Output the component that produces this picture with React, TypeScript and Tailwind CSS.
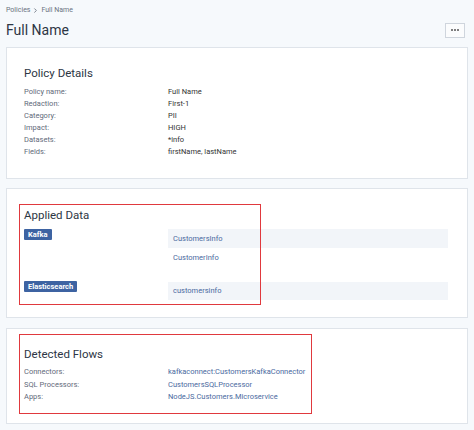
import React from "react";
import { ChevronRight } from "lucide-react";

const details = [
  ["Policy name:", "Full Name"],
  ["Redaction:", "First-1"],
  ["Category:", "PII"],
  ["Impact:", "HIGH"],
  ["Datasets:", "*info"],
  ["Fields:", "firstName, lastName"],
];

const flows = [
  ["Connectors:", "kafkaconnect:CustomersKafkaConnector"],
  ["SQL Processors:", "CustomersSQLProcessor"],
  ["Apps:", "NodeJS.Customers.Microservice"],
];

function Badge({ children }: { children: React.ReactNode }) {
  return (
    <span className="inline-block rounded-[1px] bg-[#3d63a2] px-[4px] text-[7.5px] font-bold leading-[11px] text-white">
      {children}
    </span>
  );
}

export default function App() {
  return (
    <div
      className="h-[430px] w-[474px] overflow-hidden bg-[#f6f9fc] px-[6px] pt-[6px] text-[#333]"
      style={{ fontFamily: "Roboto, 'Noto Sans', sans-serif" }}
    >
      {/* Header */}
      <div className="flex items-center gap-[2px] text-[7px] leading-[8px] text-[#6b7380]">
        <span>Policies</span>
        <ChevronRight size={7} strokeWidth={3} />
        <span>Full Name</span>
      </div>
      <div className="mt-[7px] flex h-[18px] items-center justify-between">
        <h1 className="text-[14px] leading-[18px] text-[#2d3644]">Full Name</h1>
        <button className="mr-[3px] flex h-[15px] w-[20px] items-center justify-center gap-[1.5px] border border-[#cfd5dd] bg-[#fbfcfd]">
          <span className="h-[1.5px] w-[1.5px] rounded-full bg-[#555]" />
          <span className="h-[1.5px] w-[1.5px] rounded-full bg-[#555]" />
          <span className="h-[1.5px] w-[1.5px] rounded-full bg-[#555]" />
        </button>
      </div>

      {/* Policy Details */}
      <div className="mt-[8px] border border-[#dfe4ea] bg-white pb-[20px] pl-[17px] pt-[18px]">
        <h2 className="text-[11.5px] leading-[14px] text-[#2d3644]">Policy Details</h2>
        <div className="mt-[6px] grid grid-cols-[144px_1fr] text-[7.5px] leading-[12px]">
          {details.map(([k, v]) => (
            <React.Fragment key={k}>
              <span className="text-[#5f6a7a]">{k}</span>
              <span className="text-[#333]">{v}</span>
            </React.Fragment>
          ))}
        </div>
      </div>

      {/* Applied Data */}
      <div className="relative mt-[9px] border border-[#dfe4ea] bg-white pb-[17px] pl-[17px] pr-[19px] pt-[19px]">
        <h2 className="text-[11.5px] leading-[14px] text-[#2d3644]">Applied Data</h2>
        <div className="mt-[7px] grid grid-cols-[144px_1fr] text-[7.5px] text-[#4a6aa0]">
          <div>
            <Badge>Kafka</Badge>
          </div>
          <div>
            <div className="flex h-[19px] items-center bg-[#f2f5f9] pl-[5px]">CustomersInfo</div>
            <div className="flex h-[19px] items-center pl-[5px]">CustomerInfo</div>
          </div>
        </div>
        <div className="mt-[14px] grid grid-cols-[144px_1fr] text-[7.5px] text-[#4a6aa0]">
          <div>
            <Badge>Elasticsearch</Badge>
          </div>
          <div className="mt-[1px] flex h-[18px] items-center bg-[#f2f5f9] pl-[5px]">customersinfo</div>
        </div>
        <div className="absolute left-[12px] top-[15px] h-[101px] w-[242px] border-[1.5px] border-[#e0393e]" />
      </div>

      {/* Detected Flows */}
      <div className="relative mt-[10px] border border-[#dfe4ea] bg-white pb-[19px] pl-[17px] pt-[18px]">
        <h2 className="text-[11.5px] leading-[14px] text-[#2d3644]">Detected Flows</h2>
        <div className="mt-[5px] grid grid-cols-[144px_1fr] text-[7.5px] leading-[12.5px]">
          {flows.map(([k, v]) => (
            <React.Fragment key={k}>
              <span className="text-[#5f6a7a]">{k}</span>
              <span className="text-[#4a6aa0]">{v}</span>
            </React.Fragment>
          ))}
        </div>
        <div className="absolute left-[12px] top-[5px] h-[80px] w-[293px] border-[1.5px] border-[#e0393e]" />
      </div>
    </div>
  );
}
